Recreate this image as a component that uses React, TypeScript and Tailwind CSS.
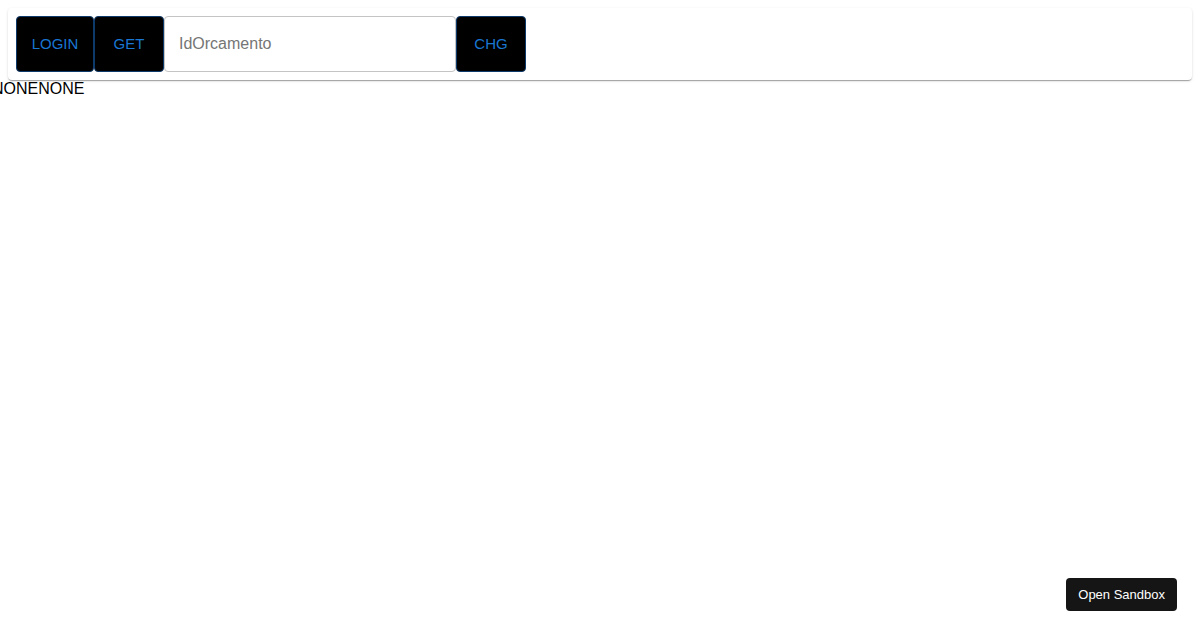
import React from 'react';

const FONT = { fontFamily: '"Liberation Sans", Arial, sans-serif' };

function DarkButton({ label, width }: { label: string; width: string }) {
  return (
    <button
      className={`${width} h-[56px] shrink-0 bg-black border border-[#0d3a6b] rounded-[4px] text-[#1976d2] text-[15px] uppercase`}
    >
      {label}
    </button>
  );
}

export default function App() {
  return (
    <div className="min-h-[630px] bg-white relative text-black overflow-hidden" style={FONT}>
      {/* Toolbar */}
      <div className="pt-2 px-2">
        <div className="flex items-center p-2 bg-white rounded-[4px] shadow-[0_2px_1px_-1px_rgba(0,0,0,0.2),0_1px_1px_0_rgba(0,0,0,0.14),0_1px_3px_0_rgba(0,0,0,0.12)]">
          <DarkButton label="LOGIN" width="w-[78px]" />
          <DarkButton label="GET" width="w-[70px]" />
          <input
            placeholder="IdOrcamento"
            className="w-[292px] h-[56px] shrink-0 border border-[#c4c4c4] rounded-[4px] px-[14px] text-[16px] text-black placeholder:text-[#757575] outline-none"
          />
          <DarkButton label="CHG" width="w-[70px]" />
        </div>
      </div>

      <div className="-ml-[8px] text-[16px] leading-[18px] text-black whitespace-nowrap">NONENONE</div>

      <button className="absolute right-[23px] bottom-[19px] h-[33px] px-[12px] bg-[#151515] rounded-[4px] text-white text-[13px]">
        Open Sandbox
      </button>
    </div>
  );
}
